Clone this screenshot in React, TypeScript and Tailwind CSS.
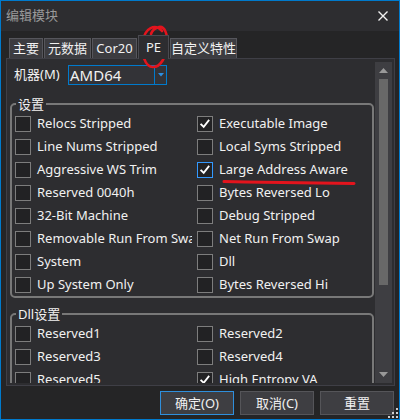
import React from "react";

const Check = ({ checked = false, focus = false }: { checked?: boolean; focus?: boolean }) => (
  <div
    className={`w-4 h-4 shrink-0 border ${focus ? "border-[#3399ff]" : "border-[#7d7d7d]"} bg-[#222224] flex items-center justify-center`}
  >
    {checked && (
      <svg width="12" height="12" viewBox="0 0 12 12">
        <path d="M2.2 6.4 L4.7 8.9 L9.6 2.6" stroke="#ffffff" strokeWidth="1.8" fill="none" strokeLinecap="square" />
      </svg>
    )}
  </div>
);

type Item = { label: string; checked?: boolean; focus?: boolean };

const Row = ({ item }: { item: Item }) => (
  <div className="h-[23px] flex items-center gap-[6px] overflow-hidden whitespace-nowrap">
    <Check checked={item.checked} focus={item.focus} />
    <span className="text-[13px] text-[#f1f1f1] leading-none">{item.label}</span>
  </div>
);

const Group = ({ title, left, right, className = "" }: { title: string; left: Item[]; right: Item[]; className?: string }) => (
  <fieldset className={`border-2 border-[#787878] rounded-[5px] px-[3px] pb-0 ml-[3px] mr-[1px] ${className}`}>
    <legend className="ml-[1px] px-[2px] text-[13px] leading-[16px] text-[#f1f1f1]">{title}</legend>
    <div className="grid grid-cols-[177px_1fr] gap-x-[5px]">
      <div className="flex flex-col overflow-hidden">
        {left.map((it) => (
          <Row key={it.label} item={it} />
        ))}
      </div>
      <div className="flex flex-col overflow-hidden">
        {right.map((it) => (
          <Row key={it.label} item={it} />
        ))}
      </div>
    </div>
  </fieldset>
);

const Tab = ({ label, w, selected = false }: { label: string; w: string; selected?: boolean }) => (
  <div
    className={`${w} flex items-center justify-center text-[13px] text-[#f1f1f1] border border-b-0 ${
      selected ? "h-[24px] bg-[#2d2d30] border-[#4a4a50] relative z-10 -mb-[1px]" : "h-[20px] bg-[#3c3c40] border-[#56565c]"
    }`}
  >
    {label}
  </div>
);

export default function App() {
  const set1Left: Item[] = [
    { label: "Relocs Stripped" },
    { label: "Line Nums Stripped" },
    { label: "Aggressive WS Trim" },
    { label: "Reserved 0040h" },
    { label: "32-Bit Machine" },
    { label: "Removable Run From Swap" },
    { label: "System" },
    { label: "Up System Only" },
  ];
  const set1Right: Item[] = [
    { label: "Executable Image", checked: true },
    { label: "Local Syms Stripped" },
    { label: "Large Address Aware", checked: true, focus: true },
    { label: "Bytes Reversed Lo" },
    { label: "Debug Stripped" },
    { label: "Net Run From Swap" },
    { label: "Dll" },
    { label: "Bytes Reversed Hi" },
  ];
  const set2Left: Item[] = [{ label: "Reserved1" }, { label: "Reserved3" }, { label: "Reserved5" }];
  const set2Right: Item[] = [{ label: "Reserved2" }, { label: "Reserved4" }, { label: "High Entropy VA", checked: true }];

  return (
    <div className="relative w-[400px] h-[420px] border border-[#007acc] bg-[#252526] flex flex-col font-['Noto_Sans','Noto_Sans_CJK_SC',sans-serif] select-none overflow-hidden">
      {/* title bar */}
      <div className="h-[30px] shrink-0 bg-[#2d2d30] flex items-center justify-between pl-[5px] pr-[11px]">
        <span className="text-[13px] text-[#9a9a9a]">编辑模块</span>
        <svg width="10" height="10" viewBox="0 0 10 10">
          <path d="M0.5 0.5 L9.5 9.5 M9.5 0.5 L0.5 9.5" stroke="#f1f1f1" strokeWidth="1.4" />
        </svg>
      </div>

      {/* tabs */}
      <div className="h-[27px] shrink-0 flex items-end gap-[1px] pl-[8px]">
        <Tab label="主要" w="w-[34px]" />
        <Tab label="元数据" w="w-[47px]" />
        <Tab label="Cor20" w="w-[45px]" />
        <Tab label="PE" w="w-[31px]" selected />
        <Tab label="自定义特性" w="w-[67px]" />
      </div>

      {/* panel */}
      <div className="h-[328px] shrink-0 ml-[5px] mr-[4px] border border-[#3f3f46] bg-[#2d2d30] flex pt-[3px] pb-[2px] pr-[2px]">
        <div className="flex-1 overflow-hidden flex flex-col">
          <div className="flex items-center pt-[3px] pl-[7px]">
            <span className="w-[54px] text-[13px] text-[#f1f1f1]">机器(M)</span>
            <div className="w-[99px] h-[20px] border border-[#007acc] bg-[#333337] flex">
              <span className="flex-1 pl-[1px] text-[15px] leading-[18px] text-[#f1f1f1]">AMD64</span>
              <div className="w-[12px] border-l border-[#007acc] flex items-center justify-center">
                <svg width="6" height="4" viewBox="0 0 6 4">
                  <path d="M0 0 L6 0 L3 3.5 Z" fill="#2d8fe0" />
                </svg>
              </div>
            </div>
          </div>
          <Group title="设置" left={set1Left} right={set1Right} className="mt-[11px] shrink-0" />
          <Group title="Dll设置" left={set2Left} right={set2Right} className="mt-[8px] shrink-0" />
        </div>
        {/* scrollbar */}
        <div className="w-[17px] bg-[#3e3e42] flex flex-col items-center">
          <div className="h-[17px] w-full flex items-center justify-center">
            <svg width="9" height="5" viewBox="0 0 9 5">
              <path d="M0 5 L4.5 0 L9 5 Z" fill="#999999" />
            </svg>
          </div>
          <div className="w-[9px] h-[206px] bg-[#686868]" />
          <div className="flex-1" />
          <div className="h-[17px] w-full flex items-center justify-center">
            <svg width="9" height="5" viewBox="0 0 9 5">
              <path d="M0 0 L9 0 L4.5 5 Z" fill="#999999" />
            </svg>
          </div>
        </div>
      </div>

      {/* buttons */}
      <div className="mt-[5px] h-[24px] shrink-0 flex justify-end gap-[6px] pr-[5px]">
        <button className="w-[74px] h-[24px] border border-[#2f8fdc] bg-[#3e3e42] text-[13px] leading-[22px] text-[#f1f1f1]">确定(O)</button>
        <button className="w-[74px] h-[24px] border border-[#555559] bg-[#3e3e42] text-[13px] leading-[22px] text-[#f1f1f1]">取消(C)</button>
        <button className="w-[74px] h-[24px] border border-[#555559] bg-[#3e3e42] text-[13px] leading-[22px] text-[#f1f1f1]">重置</button>
      </div>

      {/* resize grip */}
      <svg className="absolute right-[1px] bottom-[1px]" width="10" height="10" viewBox="0 0 10 10">
        <rect x="8" y="0" width="2" height="2" fill="#d0d0d0" />
        <rect x="4" y="4" width="2" height="2" fill="#d0d0d0" />
        <rect x="8" y="4" width="2" height="2" fill="#d0d0d0" />
        <rect x="0" y="8" width="2" height="2" fill="#d0d0d0" />
        <rect x="4" y="8" width="2" height="2" fill="#d0d0d0" />
        <rect x="8" y="8" width="2" height="2" fill="#d0d0d0" />
      </svg>

      {/* annotations */}
      <svg className="absolute left-0 top-0 pointer-events-none" width="400" height="420" viewBox="0 0 400 420">
        <path
          d="M161 30 C154 22, 144 27, 142 40 C140 53, 144 66, 152 66 C160 66, 165 56, 166 44 C167 34, 164 25, 158 26 C154 27, 151 30, 150 33"
          stroke="#e3141d"
          strokeWidth="2.6"
          fill="none"
          strokeLinecap="round"
        />
        <path d="M223 180.5 C270 181.5, 320 182, 353 182.5" stroke="#e3141d" strokeWidth="3" fill="none" strokeLinecap="round" />
      </svg>
    </div>
  );
}
